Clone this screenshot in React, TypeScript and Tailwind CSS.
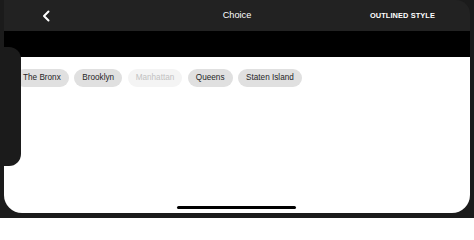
import React from "react";

const boroughs = [
  { label: "The Bronx", disabled: false },
  { label: "Brooklyn", disabled: false },
  { label: "Manhattan", disabled: true },
  { label: "Queens", disabled: false },
  { label: "Staten Island", disabled: false },
];

function Chip({ label, disabled }: { label: string; disabled: boolean }) {
  return (
    <div
      className={
        disabled
          ? "h-[18px] px-2 rounded-full flex items-center bg-[#f4f4f4] text-[#c2c2c2] text-[8.2px] leading-none whitespace-nowrap"
          : "h-[18px] px-2 rounded-full flex items-center bg-[#e0e0e0] text-[#262626] text-[8.2px] leading-none whitespace-nowrap"
      }
    >
      {label}
    </div>
  );
}

export default function App() {
  return (
    <div
      className="relative w-[474px] h-[218px] bg-[#1b1b1b] overflow-hidden"
      style={{ fontFamily: '"Liberation Sans", Arial, sans-serif' }}
    >
      {/* Screen */}
      <div className="ml-[4px] w-[466px] h-[213px] flex flex-col rounded-tr-[14px] rounded-b-[18px] overflow-hidden">
        {/* Nav bar */}
        <div className="h-[31px] bg-[#222222] grid grid-cols-[1fr_auto_1fr] items-center px-[35px]">
          <div className="flex items-center pl-[3px]">
            <svg width="8" height="12" viewBox="0 0 8 12" fill="none">
              <polyline
                points="6.5,1.5 2,6 6.5,10.5"
                stroke="white"
                strokeWidth="2"
                strokeLinecap="round"
                strokeLinejoin="round"
              />
            </svg>
          </div>
          <div className="text-white text-[9.2px]">Choice</div>
          <div className="text-right text-white text-[7.4px] font-semibold tracking-[0.1px]">
            OUTLINED STYLE
          </div>
        </div>
        {/* Black band */}
        <div className="h-[26px] bg-black" />
        {/* Content */}
        <div className="flex-1 bg-white pt-[12px] pl-[11px]">
          <div className="flex gap-[5.5px]">
            {boroughs.map((b) => (
              <Chip key={b.label} label={b.label} disabled={b.disabled} />
            ))}
          </div>
        </div>
      </div>

      {/* Sensor housing */}
      <div className="absolute left-0 top-[47px] w-[21px] h-[119px] bg-[#1b1b1b] rounded-r-[12px]" />

      {/* Home indicator */}
      <div className="absolute left-[177px] top-[206px] w-[119px] h-[2.5px] bg-black rounded-full" />
    </div>
  );
}
